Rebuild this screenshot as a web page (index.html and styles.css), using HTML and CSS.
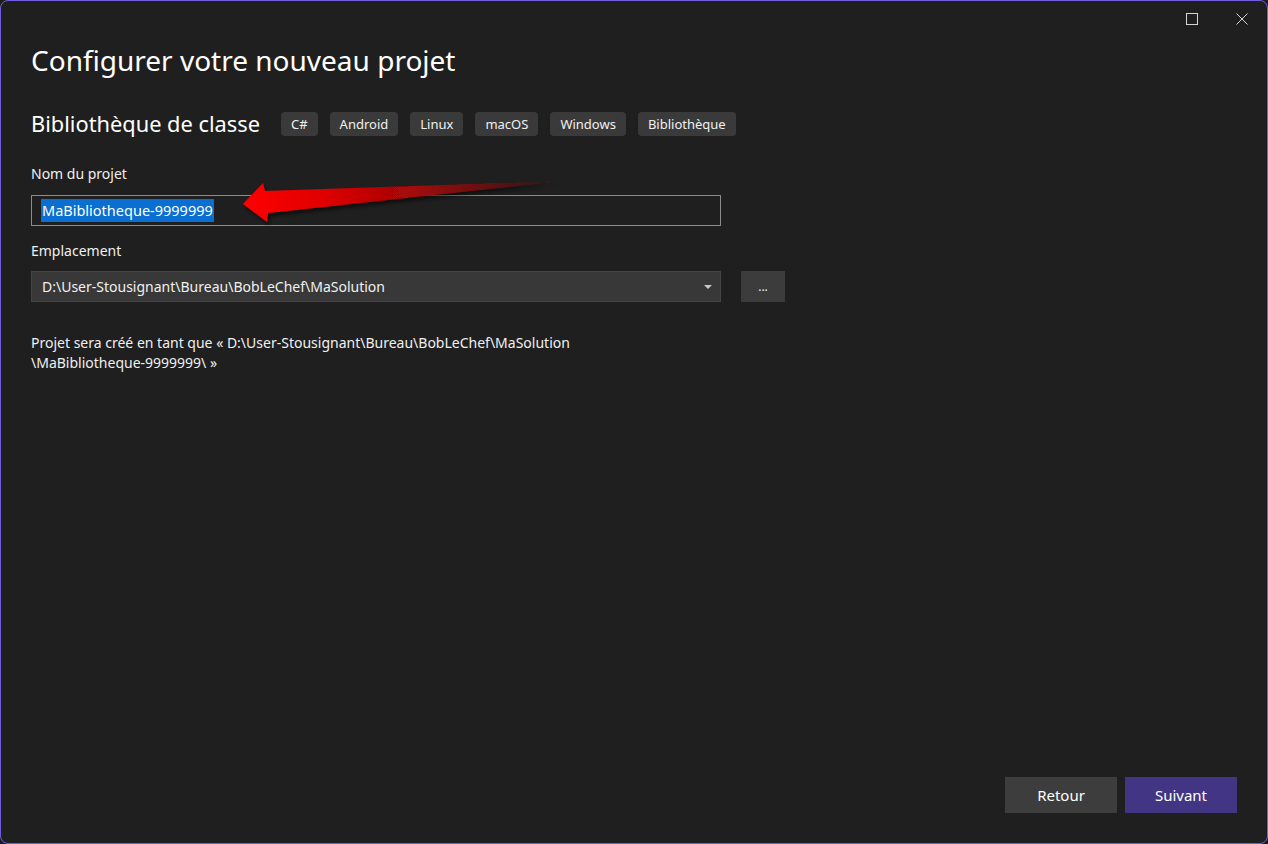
FILE: index.html
```html
<!DOCTYPE html>
<html lang="fr">
<head>
<meta charset="utf-8">
<title>Configurer votre nouveau projet</title>
<link rel="stylesheet" href="styles.css">
</head>
<body>
<div class="window">
  <div class="titlebar">
    <span class="tb-btn">
      <svg width="12" height="12" viewBox="0 0 12 12"><rect x="0.5" y="0.5" width="11" height="11" fill="none" stroke="#d6d6d6" stroke-width="1"/></svg>
    </span>
    <span class="tb-btn">
      <svg width="12" height="12" viewBox="0 0 12 12"><path d="M0.5 0.5 L11.5 11.5 M11.5 0.5 L0.5 11.5" stroke="#d6d6d6" stroke-width="1"/></svg>
    </span>
  </div>
  <div class="content">
    <h1 class="title">Configurer votre nouveau projet</h1>
    <div class="subtitle-row">
      <h2 class="subtitle">Bibliothèque de classe</h2>
      <div class="tags">
        <span class="tag">C#</span>
        <span class="tag">Android</span>
        <span class="tag">Linux</span>
        <span class="tag">macOS</span>
        <span class="tag">Windows</span>
        <span class="tag">Bibliothèque</span>
      </div>
    </div>

    <label class="label">Nom du projet</label>
    <div class="field-wrap">
      <div class="input"><span class="sel">MaBibliotheque-9999999</span></div>
      <svg class="arrow" width="340" height="60" viewBox="0 0 340 60">
        <defs>
          <linearGradient id="ag" x1="0" y1="0" x2="1" y2="0">
            <stop offset="0" stop-color="#ff0000"/>
            <stop offset="0.25" stop-color="#e00000"/>
            <stop offset="0.6" stop-color="#900a0a"/>
            <stop offset="0.85" stop-color="#5a1414" stop-opacity="0.8"/>
            <stop offset="1" stop-color="#3a1c1c" stop-opacity="0.2"/>
          </linearGradient>
          <filter id="sh" x="-10%" y="-30%" width="130%" height="180%">
            <feDropShadow dx="2" dy="3" stdDeviation="2" flood-color="#000" flood-opacity="0.6"/>
          </filter>
        </defs>
        <polygon points="3,25 23,4 25,12 323,2 28,34 27,43" fill="url(#ag)" filter="url(#sh)"/>
      </svg>
    </div>

    <label class="label label-2">Emplacement</label>
    <div class="location-row">
      <div class="combo">
        <span class="combo-text">D:\User-Stousignant\Bureau\BobLeChef\MaSolution</span>
        <svg class="caret" width="8" height="4" viewBox="0 0 8 4"><polygon points="0,0 8,0 4,4" fill="#c8c8c8"/></svg>
      </div>
      <button class="browse">...</button>
    </div>

    <p class="info">Projet sera créé en tant que « D:\User-Stousignant\Bureau\BobLeChef\MaSolution<br>\MaBibliotheque-9999999\ »</p>
  </div>
  <div class="footer">
    <button class="btn btn-back">Retour</button>
    <button class="btn btn-next">Suivant</button>
  </div>
</div>
</body>
</html>
```

FILE: styles.css
```css
* { box-sizing: border-box; }
html, body {
  margin: 0;
  padding: 0;
  width: 1268px;
  height: 844px;
  background: #1c1c1c;
  overflow: hidden;
}
body {
  font-family: "Segoe UI", "Noto Sans", "Open Sans", sans-serif;
  color: #f0f0f0;
}
.window {
  width: 1268px;
  height: 844px;
  border: 1px solid #6f5fe0;
  border-radius: 8px;
  background: #1f1f1f;
  display: flex;
  flex-direction: column;
  overflow: hidden;
}
.titlebar {
  height: 36px;
  display: flex;
  justify-content: flex-end;
  align-items: flex-start;
  padding-top: 12px;
  padding-right: 19px;
  gap: 38px;
}
.tb-btn {
  width: 12px;
  height: 12px;
  display: block;
}
.tb-btn svg { display: block; }
.content {
  flex: 1;
  padding: 0 30px;
}
.title {
  margin: 4px 0 0 0;
  font-size: 28px;
  font-weight: 400;
  line-height: 38px;
  color: #ffffff;
}
.subtitle-row {
  display: flex;
  align-items: center;
  margin-top: 32px;
  height: 26px;
}
.subtitle {
  margin: 0;
  font-size: 21.8px;
  font-weight: 400;
  color: #ffffff;
  line-height: 26px;
}
.tags {
  display: flex;
  gap: 12px;
  margin-left: 21px;
}
.tag {
  height: 24px;
  padding: 0 10px;
  background: #3a3a3a;
  border-radius: 4px;
  font-size: 13px;
  line-height: 24px;
  color: #f0f0f0;
}
.label {
  display: block;
  margin-top: 27px;
  font-size: 14px;
  line-height: 20px;
  color: #f0f0f0;
}
.label-2 { margin-top: 15px; }
.field-wrap {
  position: relative;
  margin-top: 11px;
  width: 690px;
}
.input {
  width: 690px;
  height: 31px;
  border: 1px solid #8c8c8c;
  background: #1f1f1f;
  padding: 3px 9px;
}
.sel {
  display: inline-block;
  background: #0a6fd0;
  color: #ffffff;
  font-size: 14.5px;
  line-height: 23px;
  padding: 0 1px;
}
.arrow {
  position: absolute;
  left: 209px;
  top: -16px;
  pointer-events: none;
}
.location-row {
  display: flex;
  margin-top: 10px;
  gap: 20px;
}
.combo {
  width: 690px;
  height: 31px;
  background: #383838;
  border: 1px solid #444444;
  display: flex;
  align-items: center;
  justify-content: space-between;
  padding: 0 8px 0 10px;
}
.combo-text {
  font-size: 14px;
  color: #f0f0f0;
}
.caret { display: block; }
.browse {
  width: 44px;
  height: 31px;
  background: #3c3c3c;
  border: none;
  color: #f0f0f0;
  font-family: inherit;
  font-size: 12px;
  padding: 0;
  line-height: 31px;
}
.info {
  margin: 31px 0 0 0;
  font-size: 14px;
  line-height: 20px;
  color: #f0f0f0;
}
.footer {
  display: flex;
  justify-content: flex-end;
  gap: 8px;
  padding: 0 30px 30px 0;
}
.btn {
  width: 112px;
  height: 36px;
  border: none;
  font-family: inherit;
  font-size: 15px;
  color: #ffffff;
}
.btn-back { background: #3d3d3d; }
.btn-next { background: #413584; }
```
